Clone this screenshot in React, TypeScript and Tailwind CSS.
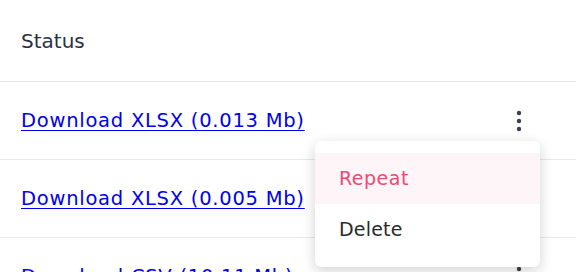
const rows = [
    { label: "Download XLSX (0.013 Mb)" },
    { label: "Download XLSX (0.005 Mb)" },
    { label: "Download CSV (10.11 Mb)" },
];

const Dots = () => (
    <svg width="24" height="24" viewBox="0 0 24 24" className="text-[#3b3f4a]">
        <circle cx="12" cy="4" r="2.2" fill="currentColor" />
        <circle cx="12" cy="12" r="2.2" fill="currentColor" />
        <circle cx="12" cy="20" r="2.2" fill="currentColor" />
    </svg>
);

const App = () => {
    return (
        <div className="relative w-[576px] h-[272px] overflow-hidden bg-white" style={{ fontFamily: '"DejaVu Sans", "Liberation Sans", sans-serif' }}>
            {/* header */}
            <div className="h-[82px] border-b border-[#e5e8ec] flex items-center px-[21px]">
                <span className="text-[20px] text-[#2b3044]">Status</span>
            </div>

            {/* rows */}
            {rows.map((row, idx) => (
                <div key={idx} className="h-[78px] border-b border-[#e5e8ec] flex items-center justify-between pl-[21px] pr-[45px]">
                    <a href="#" className="text-[19.5px] tracking-[0.75px] text-[#0000ee] underline underline-offset-[3px]">{row.label}</a>
                    <Dots />
                </div>
            ))}

            {/* menu */}
            <div className="absolute left-[315px] top-[141px] w-[225px] py-3 bg-white rounded-md shadow-[0_4px_14px_rgba(0,0,0,0.18)]">
                <div className="h-[51px] flex items-center pl-[24px] bg-[#fdf5f7] text-[19px] tracking-[0.5px] text-[#ec4a74]">Repeat</div>
                <div className="h-[51px] flex items-center pl-[24px] text-[19px] tracking-[0.2px] text-[#2a2a2a]">Delete</div>
            </div>
        </div>
    )
}

export default App
